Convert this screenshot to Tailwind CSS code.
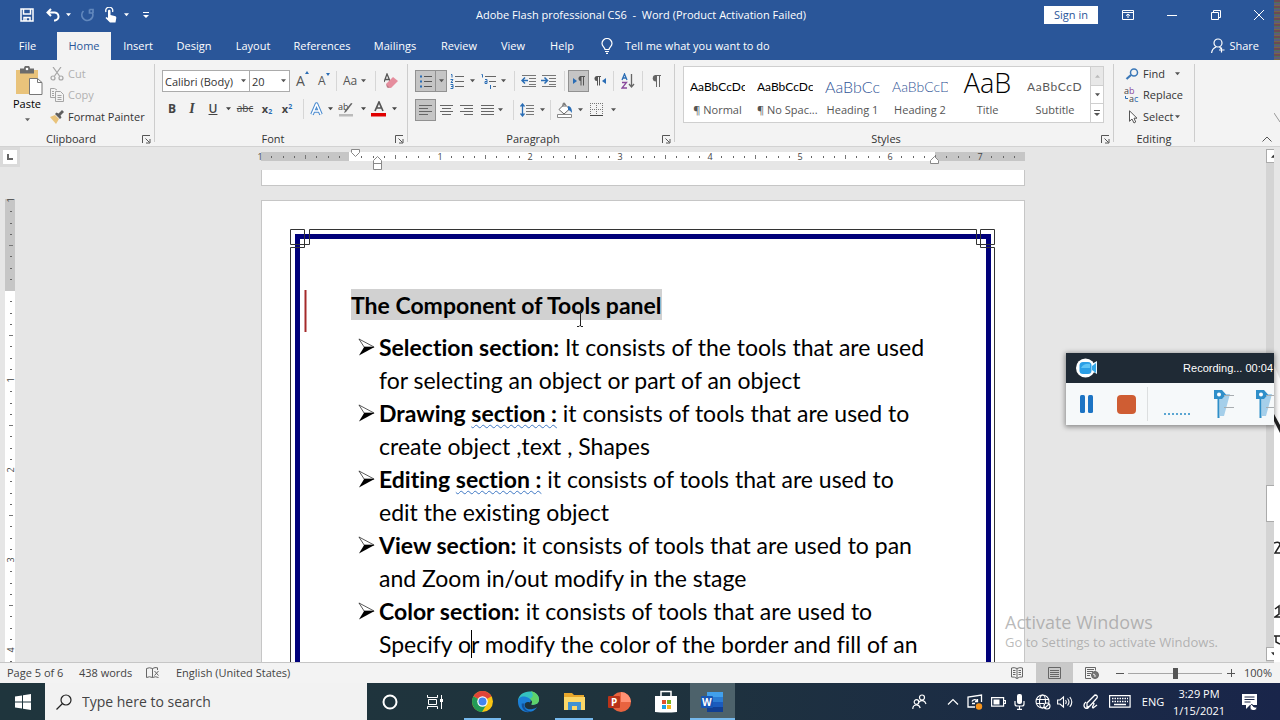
<!DOCTYPE html>
<html lang="en">
<head>
  <meta charset="UTF-8" />
  <meta name="viewport" content="width=device-width, initial-scale=1.0" />
  <title>Adobe Flash professional CS6 - Word</title>
  <script src="https://cdn.jsdelivr.net/npm/@tailwindcss/browser@4"></script>
</head>
<body class="h-screen overflow-hidden flex flex-col bg-[#e6e6e6] font-['Open_Sans',sans-serif] text-[11px] leading-4 text-[#333]">
  <!-- shared symbols -->
  <svg class="hidden">
    <symbol id="arrow" viewBox="0 0 6 4"><path d="M0 0h6L3 3.5z" fill="currentColor" /></symbol>
    <symbol id="launcher" viewBox="0 0 9 9"><path d="M.5 8V.5H8M3.5 3.5l4 4M8 4v4H4" fill="none" stroke="#555" /></symbol>
    <symbol id="bullet" viewBox="0 0 18 20"><path d="M1 1.500 17 10 6.500 10z" fill="#fff" stroke="#222" stroke-width=".8" /><path d="M6.500 10H17.500L1 19z" fill="#000" /></symbol>
  </svg>

  <div class="relative flex flex-1 min-h-0">
    <div class="flex flex-col flex-1 min-w-0">
      <!-- title bar -->
      <header class="bg-[#2a5699] text-white">
        <div class="flex items-center h-8 pb-0.5">
          <div class="flex items-center w-[400px] pl-5">
            <button aria-label="Save" class="w-[26px]"><svg class="w-3.5 h-3.5" viewBox="0 0 14 14" fill="none" stroke="#fff" stroke-width="1.500"><path d="M1 1h12v12H1zM3.500 1v5h7V1M4 13V9.500h6V13M6 10v3" /></svg></button>
            <button aria-label="Undo" class="w-[18px]"><svg class="w-3.5 h-3.5" viewBox="0 0 14 14" fill="none" stroke="#fff" stroke-width="2"><path d="M5 1 1.500 4.500 5 8M2 4.500h6a4 4 0 0 1 1 8H8" /></svg></button>
            <svg class="w-[5px] h-1 mx-0.5"><use href="#arrow" /></svg>
            <button aria-label="Redo" class="w-6 ml-[7px] text-[#6288bd]"><svg class="w-3.5 h-3.5" viewBox="0 0 14 14" fill="none" stroke="currentColor" stroke-width="1.700"><path d="M9.500 1.500H13V5M3.500 3a5.500 5.500 0 1 0 9 2M9.500 1.500v3.500H13" /></svg></button>
            <button aria-label="Touch mode" class="w-[18px]"><svg class="w-3.5 h-4" viewBox="0 0 14 16"><path d="M2 5a3.500 3.500 0 1 1 6.500 0" fill="none" stroke="#fff" stroke-width="1.300" /><path d="M4 4a1 1 0 0 1 2.500 0v4l5 1.200q1 .5.800 1.800l-.8 4.500H6L1.500 11l1-1L4 11z" fill="#fff" /></svg></button>
            <svg class="w-[5px] h-1 mx-0.5"><use href="#arrow" /></svg>
            <button aria-label="Customize toolbar" class="ml-3"><svg class="w-1.5 h-2" viewBox="0 0 6 8" fill="#fff"><path d="M0 1h6v1H0zM0 4h6L3 7z" /></svg></button>
          </div>
          <h1 class="flex-1 pl-[76px] whitespace-pre">Adobe Flash professional CS6  -  Word (Product Activation Failed)</h1>
          <button class="w-[54px] h-[18px] bg-white text-[#2a5699] leading-[18px]">Sign in</button>
          <button aria-label="Ribbon display options" class="w-11 ml-2 flex justify-center"><svg class="w-3 h-2.5" viewBox="0 0 12 10" fill="none" stroke="#fff"><path d="M.5.500h11v9H.500zM.500 2.500h11M6 8V4M4 5.700 6 4l2 1.700" /></svg></button>
          <button aria-label="Minimize" class="w-11 flex justify-center"><svg class="w-2.5 h-2.5" viewBox="0 0 10 10" stroke="#fff"><path d="M0 5.500h10" /></svg></button>
          <button aria-label="Restore" class="w-11 flex justify-center"><svg class="w-2.5 h-2.5" viewBox="0 0 10 10" fill="none" stroke="#fff"><path d="M.5 2.500h7v7h-7zM2.500 2V.500h7v7H8" /></svg></button>
          <button aria-label="Close" class="w-[42px] -mr-1.5 flex justify-center"><svg class="w-2.5 h-2.5" viewBox="0 0 10 10" stroke="#fff"><path d="M0 0l10 10M10 0 0 10" /></svg></button>
        </div>
        <!-- tabs -->
        <nav class="flex h-7 items-stretch">
          <button class="w-[57px] pr-0.5">File</button>
          <button class="w-[54px] bg-[#f3f3f3] text-[#2a5699]">Home</button>
          <button class="w-[54px]">Insert</button>
          <button class="w-[58px]">Design</button>
          <button class="w-[60px]">Layout</button>
          <button class="w-[78px]">References</button>
          <button class="w-[68px]">Mailings</button>
          <button class="w-[60px]">Review</button>
          <button class="w-12">View</button>
          <button class="w-[50px]">Help</button>
          <button class="flex items-center gap-3 pl-3.5"><svg class="w-3 h-4" viewBox="0 0 12 16" fill="none" stroke="#fff" stroke-width="1.200"><path d="M4 11.500c0-2-3-3-3-6a5 5 0 0 1 10 0c0 3-3 4-3 6zM4 13.500h4M5 15.400h2" /></svg>Tell me what you want to do</button>
          <button class="flex items-center gap-1 ml-auto pr-[15px]"><svg class="w-3.5 h-4" viewBox="0 0 14 16" fill="none" stroke="#fff" stroke-width="1.200"><circle cx="7" cy="5" r="4" /><path d="M.6 15c.3-3 2-5 4.500-6M8.500 9l1.500 1.500M10.500 9.500v5M8 12h5.500" /></svg>Share</button>
        </nav>
      </header>

      <!-- ribbon -->
      <section class="flex items-stretch bg-[#f3f3f3] h-[87px] border-b border-[#d2d2d2] pt-1 text-[#333]">
        <div class="flex flex-col w-[155px] border-r border-[#cdcdcd] mb-1">
          <div class="flex h-[67px] shrink-0">
            <button class="flex flex-col items-center w-[54px] pt-0.5">
              <svg class="w-7 h-[30px] ml-1" viewBox="0 0 28 30"><path d="M1 4h22v24H1z" fill="#e9c37b" /><path d="M5 2.500h4a3 3 0 0 1 6 0h4v5H5z" fill="#6b6b6b" /><circle cx="12" cy="3" r="1.300" fill="#fff" /><path d="M14.500 12.500h8l4.500 4v12H14.500z" fill="#fff" stroke="#777" /><path d="M22.500 12.500v4H27" fill="none" stroke="#777" /></svg>
              <span class="text-black">Paste</span>
              <svg class="w-[5px] h-1 mt-1.5 text-[#666]"><use href="#arrow" /></svg>
            </button>
            <div class="flex flex-col -mt-px">
              <button disabled class="flex items-center gap-1 h-[21px] text-[#b1b1b1] -ml-1"><svg class="w-3.5 h-3.5" viewBox="0 0 14 14" fill="none" stroke="#a5a5a5" stroke-width="1.200"><path d="M3 0l6.500 9M11 0 4.500 9" /><circle cx="3" cy="11" r="2" /><circle cx="11" cy="11" r="2" /></svg>Cut</button>
              <button disabled class="flex items-center gap-1 h-[22px] text-[#b1b1b1] -ml-1"><svg class="w-3.5 h-3.5" viewBox="0 0 14 14" fill="none" stroke="#a5a5a5"><path d="M5 9.500H.500v-9h4L7 2M2 3.500h2M2 5.500h2M2 7.500h2M5.500 3.500h5l3 3v7h-8zM7.500 7.500h4M7.500 9.500h4M7.500 11.500h4" /></svg>Copy</button>
              <button class="flex items-center gap-1 h-[21px] -ml-1"><svg class="w-3.5 h-3.5" viewBox="0 0 14 14"><path d="M0 7l5-2 4 4-3 5z" fill="#e9c37b" /><path d="M5 4l1.500-1.500 2 1L12 0l2 2-3.500 3.500 1 2L10 9z" fill="#5f5f5f" /></svg>Format Painter</button>
            </div>
          </div>
          <div class="flex items-center"><span class="flex-1 text-center">Clipboard</span><svg class="w-[9px] h-[9px] mr-[3px]"><use href="#launcher" /></svg></div>
        </div>

        <div class="flex flex-col w-[253px] border-r border-[#cdcdcd] mb-1">
          <div class="flex flex-col h-[67px] shrink-0 pl-[7px] gap-1 pt-1.5">
            <div class="flex items-center h-[22px]">
              <div class="relative w-[88px]">
                <input aria-label="Font" value="Calibri (Body)" class="w-full h-[22px] border border-[#ababab] bg-white px-0.5" />
                <svg class="absolute right-1 top-[9px] w-[5px] h-1 text-[#555]"><use href="#arrow" /></svg>
              </div>
              <div class="relative w-[41px] -ml-px">
                <input aria-label="Font size" value="20" class="w-full h-[22px] border border-[#ababab] bg-white px-0.5" />
                <svg class="absolute right-1 top-[9px] w-[5px] h-1 text-[#555]"><use href="#arrow" /></svg>
              </div>
              <button aria-label="Grow font" class="flex w-[22px] pl-1.5 text-sm text-[#555]">A<svg class="w-1 h-1" viewBox="0 0 4 4" fill="#2a6db5"><path d="M0 3h4L2 0z" /></svg></button>
              <button aria-label="Shrink font" class="flex w-[22px] pl-1.5 text-xs text-[#555]">A<svg class="w-1 h-1" viewBox="0 0 4 4" fill="#2a6db5"><path d="M0 0h4L2 3z" /></svg></button>
              <span class="w-px h-5 bg-[#d6d6d6] ml-0.5"></span>
              <button aria-label="Change case" class="flex items-center gap-1 w-[38px] pl-1.5 text-xs text-[#555]">Aa<svg class="w-[5px] h-1"><use href="#arrow" /></svg></button>
              <span class="w-px h-5 bg-[#d6d6d6]"></span>
              <button aria-label="Clear formatting" class="pl-2"><svg class="w-3.5 h-4" viewBox="0 0 14 16"><path d="M0 9 3 1l3 7M1 6.500h4" fill="none" stroke="#555" stroke-width="1.300" /><path d="M2 11l7-7 5 4-7 7-3-.5z" fill="#e58d9d" /><path d="M2 11l4 4-3-.5z" fill="#b97783" /></svg></button>
            </div>
            <div class="flex items-center h-[22px] pt-1 text-xs text-[#444]">
              <button class="w-5 font-bold">B</button>
              <button class="w-5 italic font-semibold font-['Liberation_Serif',serif] text-sm">I</button>
              <button class="w-[22px] font-semibold underline">U</button>
              <svg class="w-[5px] h-1 mx-0.5"><use href="#arrow" /></svg>
              <button class="w-6 text-[10px] line-through">abc</button>
              <button class="w-5 font-bold text-[11px]">x<sub class="text-[7px] text-[#2a6db5]">2</sub></button>
              <button class="w-5 font-bold text-[11px]">x<sup class="text-[7px] text-[#2a6db5]">2</sup></button>
              <span class="w-px h-5 bg-[#d6d6d6] ml-1.5"></span>
              <button aria-label="Text effects" class="w-6 flex justify-center"><svg class="w-[13px] h-3.5" viewBox="0 0 13 14" fill="none" stroke-linejoin="round"><path d="M2 12.500 6.500 2 11 12.500M4 9h5" stroke="#4a8bd0" stroke-width="3.600" /><path d="M2 12.500 6.500 2 11 12.500M4 9h5" stroke="#fff" stroke-width="1.600" /></svg></button>
              <svg class="w-[5px] h-1"><use href="#arrow" /></svg>
              <button aria-label="Highlight" class="w-[26px] flex justify-center"><svg class="w-4 h-4" viewBox="0 0 16 16"><text x="0" y="9" font-size="9" fill="#444">ab</text><path d="M14.500 2.500 8 11l-2 1 1-2.500L13 2z" fill="#666" /><path d="M1 13h14v2.500H1z" fill="#bbb" /></svg></button>
              <svg class="w-[5px] h-1 ml-0.5"><use href="#arrow" /></svg>
              <button aria-label="Font color" class="w-[26px] flex justify-center"><svg class="w-4 h-4" viewBox="0 0 16 16"><path d="M4 10 8 1l4 9M5.500 7h5" fill="none" stroke="#555" stroke-width="1.700" /><path d="M0 12h15v3.500H0z" fill="#e00000" /></svg></button>
              <svg class="w-[5px] h-1"><use href="#arrow" /></svg>
            </div>
          </div>
          <div class="flex items-center"><span class="flex-1 text-center pr-1">Font</span><svg class="w-[9px] h-[9px] mr-[3px]"><use href="#launcher" /></svg></div>
        </div>

        <div class="flex flex-col w-[267px] border-r border-[#cdcdcd] mb-1 text-[#555]">
          <div class="flex flex-col h-[67px] shrink-0 pl-[7px] gap-[7px] pt-1.5">
            <div class="flex items-center h-[22px]">
              <button aria-label="Bullets" class="flex items-center justify-center w-[21px] h-[22px] bg-[#c5c5c5] border border-[#919191]"><svg class="w-3.5 h-3.5" viewBox="0 0 14 14"><path d="M5 2.500h8M5 7.500h8M5 12.500h8" stroke="#555" /><path d="M1 1.500h2v2H1zM1 6.500h2v2H1zM1 11.500h2v2H1z" fill="#2a6db5" /></svg></button>
              <button aria-label="Bullet options" class="flex items-center justify-center w-3 h-[22px] bg-[#c5c5c5] border border-[#919191] -ml-px"><svg class="w-[5px] h-1"><use href="#arrow" /></svg></button>
              <button aria-label="Numbering" class="flex items-center gap-1.5 w-8 pl-[3px]"><svg class="w-3.5 h-4 shrink-0" viewBox="0 0 14 16"><path d="M5 3.500h9M5 8.500h9M5 13.500h9" stroke="#666" /><path d="M1 1.500h1v3M.5 6.500H3L1 9.500h2M.5 11.500H3v4H.500M1 13.500h2" fill="none" stroke="#2a6db5" /></svg><svg class="w-[5px] h-1"><use href="#arrow" /></svg></button>
              <button aria-label="Multilevel list" class="flex items-center gap-1 w-[29px] pl-0.5"><svg class="w-4 h-4 shrink-0" viewBox="0 0 16 16"><path d="M4 3.500h11M8 8.500h7M12 13.500h3" stroke="#666" /><path d="M.5 1.500h1v3M4 6.500h2v4H4v-2h2M9.500 12v4" fill="none" stroke="#2a6db5" /></svg><svg class="w-[5px] h-1"><use href="#arrow" /></svg></button>
              <span class="w-px h-5 bg-[#d6d6d6] ml-1.5"></span>
              <button aria-label="Decrease indent" class="w-[22px] pl-1.5"><svg class="w-4 h-3.5" viewBox="0 0 16 14"><path d="M1 1.500h14M8 4.500h7M8 7.500h7M8 10.500h7M1 12.500h14" stroke="#777" /><path d="M7 6.500H1.500M4 3.500l-3 3 3 3" fill="none" stroke="#2a6db5" stroke-width="1.500" /></svg></button>
              <button aria-label="Increase indent" class="w-[27px] pl-1"><svg class="w-4 h-3.5" viewBox="0 0 16 14"><path d="M1 1.500h14M8 4.500h7M8 7.500h7M8 10.500h7M1 12.500h14" stroke="#777" /><path d="M0 6.500h6M3.500 3.500l3 3-3 3" fill="none" stroke="#2a6db5" stroke-width="1.500" /></svg></button>
              <span class="w-px h-5 bg-[#d6d6d6]"></span>
              <button aria-label="Left to right" class="flex items-center justify-center w-[21px] h-[22px] bg-[#c5c5c5] border border-[#919191] ml-[3px]"><svg class="w-3 h-3" viewBox="0 0 12 12"><path d="M0 3v6l4-3z" fill="#2a6db5" /><path d="M8 1.500v9M10.500 1.500v9M7 1.500h5" stroke="#555" /><path d="M8 1a2.500 2.500 0 0 0 0 5z" fill="#555" /></svg></button>
              <button aria-label="Right to left" class="flex items-center justify-center w-[21px]"><svg class="w-3 h-3" viewBox="0 0 12 12"><path d="M12 3v6L8 6z" fill="#2a6db5" /><path d="M3.500 1.500v9M5.500 1.500v9M3 1.500h4" stroke="#555" /><path d="M3 1a2.500 2.500 0 0 0 0 5z" fill="#555" /></svg></button>
              <span class="w-px h-5 bg-[#d6d6d6] ml-[3px]"></span>
              <button aria-label="Sort" class="w-[28px] pl-[7px]"><svg class="w-3.5 h-4" viewBox="0 0 14 16" fill="none" stroke-width="1.300"><path d="M1 7 3.500 1 6 7M2 5h3" stroke="#2a6db5" /><path d="M1 9.500h4.500L1 15h5" stroke="#8a4a9c" /><path d="M10.500 1v12.500M8 11l2.500 3L13 11" stroke="#666" /></svg></button>
              <span class="w-px h-5 bg-[#d6d6d6]"></span>
              <button aria-label="Show marks" class="pl-2"><svg class="w-2.5 h-3" viewBox="0 0 10 12"><path d="M5.500 1v11M8.500 1v11M4 .500h6" stroke="#666" /><path d="M5 0a3 3 0 0 0 0 6.500z" fill="#666" /></svg></button>
            </div>
            <div class="flex items-center h-[22px]">
              <button aria-label="Align left" class="flex items-center justify-center w-[21px] h-[22px] bg-[#c5c5c5] border border-[#919191]"><svg class="w-3.5 h-3" viewBox="0 0 14 12"><path d="M0 1.500h13M0 4.500h9M0 7.500h13M0 10.500h9" stroke="#666" /></svg></button>
              <button aria-label="Center" class="flex justify-center w-[21px]"><svg class="w-3.5 h-3" viewBox="0 0 14 12"><path d="M0 1.500h13M2 4.500h9M0 7.500h13M2 10.500h9" stroke="#666" /></svg></button>
              <button aria-label="Align right" class="flex justify-center w-5"><svg class="w-3.5 h-3" viewBox="0 0 14 12"><path d="M0 1.500h13M4 4.500h9M0 7.500h13M4 10.500h9" stroke="#666" /></svg></button>
              <button aria-label="Justify" class="flex justify-center w-[21px]"><svg class="w-3.5 h-3" viewBox="0 0 14 12"><path d="M0 1.500h13M0 4.500h13M0 7.500h13M0 10.500h13" stroke="#666" /></svg></button>
              <svg class="w-[5px] h-1"><use href="#arrow" /></svg>
              <span class="w-px h-5 bg-[#d6d6d6] ml-2.5"></span>
              <button aria-label="Line spacing" class="flex items-center gap-1.5 w-8 pl-1.5"><svg class="w-3.5 h-3.5 shrink-0" viewBox="0 0 14 14" fill="none"><path d="M6 2.500h8M6 5.500h8M6 8.500h8M6 11.500h8" stroke="#777" /><path d="M2.500 1v12M.500 3.500l2-2.500 2 2.500M.500 10.500l2 2.500 2-2.500" stroke="#2a6db5" stroke-width="1.300" /></svg><svg class="w-[5px] h-1 shrink-0"><use href="#arrow" /></svg></button>
              <span class="w-px h-5 bg-[#d6d6d6] ml-1"></span>
              <button aria-label="Shading" class="flex items-center gap-[5px] w-9 pl-1.5"><svg class="w-4 h-4 shrink-0" viewBox="0 0 16 16"><path d="M2 7.500 7.500 2l5 5-5.500 5z" fill="#fff" stroke="#666" /><path d="M6 5V1.500q1-1 2 0V5" fill="none" stroke="#666" /><path d="M11 4q4 0 4 7-2-3-4-3z" fill="#2a6db5" /><path d="M.5 12.500h14v3H.500z" fill="#fff" stroke="#888" /></svg><svg class="w-[5px] h-1 shrink-0"><use href="#arrow" /></svg></button>
              <button aria-label="Borders" class="flex items-center gap-[7px] w-8 pl-[3px]"><svg class="w-3.5 h-3.5 shrink-0" viewBox="0 0 14 14"><path d="M.5 0v12M12.500 0v12M6.500 0v12M0 .500h13M0 6.500h13" stroke="#777" stroke-dasharray="1 1" /><path d="M0 12.500h13" stroke="#444" /></svg><svg class="w-[5px] h-1 shrink-0"><use href="#arrow" /></svg></button>
            </div>
          </div>
          <div class="flex items-center text-[#333]"><span class="flex-1 text-center pr-1">Paragraph</span><svg class="w-[9px] h-[9px] mr-[3px]"><use href="#launcher" /></svg></div>
        </div>

        <div class="flex flex-col w-[439px] border-r border-[#cdcdcd] mb-1">
          <div class="h-[67px] shrink-0 pl-2 pr-[9px] pt-0.5">
            <div class="flex h-[57px] bg-white border border-[#cfcfcf] text-[#555]">
              <button class="flex flex-col w-[67px] px-1.5"><span class="w-full h-[35px] overflow-hidden whitespace-nowrap text-left leading-10 font-['Lato',sans-serif] text-xs text-black">AaBbCcDc</span><span class="w-full whitespace-nowrap">¶ Normal</span></button>
              <button class="flex flex-col w-[68px] px-1.5"><span class="w-full h-[35px] overflow-hidden whitespace-nowrap text-left leading-10 font-['Lato',sans-serif] text-xs text-black">AaBbCcDc</span><span class="w-full whitespace-nowrap">¶ No Spac...</span></button>
              <button class="flex flex-col w-[67px] px-1.5"><span class="w-full h-[35px] overflow-hidden whitespace-nowrap text-left leading-10 font-['Lato',sans-serif] font-light text-base text-[#2f5496]">AaBbCc</span><span class="w-full whitespace-nowrap">Heading 1</span></button>
              <button class="flex flex-col w-[68px] px-1.5"><span class="w-full h-[35px] overflow-hidden whitespace-nowrap text-left leading-10 font-['Lato',sans-serif] font-light text-sm text-[#2f5496]">AaBbCcD</span><span class="w-full whitespace-nowrap">Heading 2</span></button>
              <button class="flex flex-col w-[67px] px-1.5"><span class="w-full h-[35px] overflow-hidden whitespace-nowrap text-center leading-8 font-['Open_Sans',sans-serif] font-light text-[27px] text-black">AaB</span><span class="w-full whitespace-nowrap">Title</span></button>
              <button class="flex flex-col w-[68px] px-1.5"><span class="w-full h-[35px] overflow-hidden whitespace-nowrap text-left leading-10 font-['Lato',sans-serif] text-xs tracking-wider text-[#5a5a5a]">AaBbCcD</span><span class="w-full whitespace-nowrap">Subtitle</span></button>
              <div class="flex flex-col flex-1 ml-px border-l border-[#cfcfcf] divide-y divide-[#cfcfcf]">
                <button aria-label="Scroll up" disabled class="flex-1 flex items-center justify-center bg-[#e8e8e8] text-[#bbb]"><svg class="w-[5px] h-1 rotate-180"><use href="#arrow" /></svg></button>
                <button aria-label="Scroll down" class="flex-1 flex items-center justify-center"><svg class="w-[5px] h-1"><use href="#arrow" /></svg></button>
                <button aria-label="More styles" class="flex-1 flex items-center justify-center"><svg class="w-1.5 h-1.5" viewBox="0 0 6 6" fill="#555"><path d="M0 0h6v1H0zM0 3h6L3 6z" /></svg></button>
              </div>
            </div>
          </div>
          <div class="flex items-center"><span class="flex-1 text-center pr-1">Styles</span><svg class="w-[9px] h-[9px] mr-[3px]"><use href="#launcher" /></svg></div>
        </div>

        <div class="flex flex-col w-[81px] border-r border-[#cdcdcd] mb-1">
          <div class="flex flex-col h-[67px] shrink-0 pl-[11px] -mt-px mb-px">
            <button class="flex items-center gap-1 h-[21px]"><svg class="w-3.5 h-3" viewBox="0 0 14 12" fill="none" stroke="#3b78b8"><circle cx="9" cy="4.500" r="3.500" stroke-width="1.500" /><path d="M6 7 1.500 11" stroke-width="2.200" /></svg>Find<svg class="w-[5px] h-1 ml-1.5 text-[#555]"><use href="#arrow" /></svg></button>
            <button class="flex items-center gap-1 h-[22px]"><svg class="w-3.5 h-3.5 overflow-visible" viewBox="0 0 14 14"><text x="-1" y="6" font-size="9" fill="#444">a<tspan fill="#8a4a9c">b</tspan></text><text x="4" y="14" font-size="9" fill="#444">a<tspan fill="#2a6db5">c</tspan></text><path d="M.5 8v2.500H3" fill="none" stroke="#2a6db5" /></svg>Replace</button>
            <button class="flex items-center gap-1 h-[21px]"><svg class="w-3.5 h-3.5" viewBox="0 0 14 14"><path d="M4.500.800v10.500L7 9l2 4 1.700-1L9 8.200h3z" fill="#fff" stroke="#555" /></svg>Select<svg class="w-[5px] h-1 -ml-0.5 text-[#555]"><use href="#arrow" /></svg></button>
          </div>
          <span class="text-center">Editing</span>
        </div>
        <button aria-label="Collapse ribbon" class="ml-auto self-end mb-1 mr-0.5"><svg class="w-2.5 h-1.5" viewBox="0 0 10 6" fill="none" stroke="#555"><path d="M.5 5.500 5 1l4.500 4.500" /></svg></button>
      </section>

      <!-- document area -->
      <main class="flex flex-1 min-h-0 overflow-hidden">
        <div class="w-5 shrink-0">
          <button aria-label="Tab selector" class="flex items-center justify-center w-5 h-5 border-3 border-[#dadada] bg-white text-[#666]"><svg class="w-1.5 h-1.5" viewBox="0 0 6 6"><path d="M1 0v5h5" fill="none" stroke="currentColor" stroke-width="2" /></svg></button>
          <svg id="vruler" class="w-4 h-[468px] mt-[31px]"></svg>
        </div>

        <div class="flex-1 min-w-0 overflow-hidden">
          <div class="w-[764px] mx-auto">
            <svg id="hruler" class="block w-full h-[23px] overflow-visible"></svg>
            <div class="h-4 bg-white border border-t-0 border-[#c6c6c6]"></div>
            <article class="relative mt-3.5 h-[980px] bg-white border border-[#c6c6c6] pt-[88px] pl-[89px] pr-20 font-['Lato',sans-serif] text-[23px] leading-[33px] text-black [font-variant-ligatures:none]">
              <!-- page border -->
              <svg class="absolute -left-px -top-px w-full h-full" fill="none">
                <path d="M36.500 980V36.500H727.500V980" stroke="#00007a" stroke-width="5" />
                <path d="M29.500 980V47.500h14v-18h-14v15h19v-15H715.500v15h18v-15h-14v18h14V980" stroke="#333" />
                <path d="M44.500 90v42" stroke="#a52a2a" stroke-width="2" />
              </svg>
              <h2 class="relative h-[42px] font-bold"><span class="inline-block h-[31px] leading-8 bg-[#d1d1d1]">The Component of Tools panel</span></h2>
              <ul class="relative pl-7">
                <li class="relative"><svg class="absolute -left-[21px] top-1.5 w-[17px] h-5"><use href="#bullet" /></svg><b>Selection section:</b> It consists of the tools that are used<br>for selecting an object or part of an object</li>
                <li class="relative"><svg class="absolute -left-[21px] top-1.5 w-[17px] h-5"><use href="#bullet" /></svg><b>Drawing <span class="underline decoration-wavy decoration-1 decoration-[#3f78c4] underline-offset-2">section :</span></b> it consists of tools that are used to<br>create object ,text , Shapes</li>
                <li class="relative"><svg class="absolute -left-[21px] top-1.5 w-[17px] h-5"><use href="#bullet" /></svg><b>Editing <span class="underline decoration-wavy decoration-1 decoration-[#3f78c4] underline-offset-2">section :</span></b> it consists of tools that are used to<br>edit the existing object</li>
                <li class="relative"><svg class="absolute -left-[21px] top-1.5 w-[17px] h-5"><use href="#bullet" /></svg><b>View section:</b> it consists of tools that are used to pan<br>and Zoom in/out modify in the stage</li>
                <li class="relative"><svg class="absolute -left-[21px] top-1.5 w-[17px] h-5"><use href="#bullet" /></svg><b>Color section:</b> it consists of tools that are used to<br>Specify o<span class="relative"><span class="absolute left-0 top-0 w-px h-7 bg-black"></span>r</span> modify the color of the border and fill of an</li>
              </ul>
              <svg class="absolute left-[314px] top-[110px] w-2 h-4" viewBox="0 0 8 16" fill="none" stroke="#222"><path d="M1 .500h2l1 1 1-1h2M4.500 1v14M1 15.500h2l1-1 1 1h2" /></svg>
            </article>
          </div>
        </div>

        <div class="flex flex-col w-2 shrink-0 bg-[#d4d4d4] mt-0.5 overflow-hidden">
          <button aria-label="Page up" class="w-3.5 h-3.5 shrink-0 bg-white border border-[#ababab] flex items-center justify-center"><svg class="w-[5px] h-1 rotate-180"><use href="#arrow" /></svg></button>
          <div class="w-3.5 h-[37px] mt-auto mb-[125px] shrink-0 bg-white border border-[#ababab]"></div>
          <button aria-label="Page down" class="w-3.5 h-3.5 mb-px shrink-0 bg-white border border-[#ababab] flex items-center justify-center"><svg class="w-[5px] h-1"><use href="#arrow" /></svg></button>
        </div>
      </main>

      <!-- status bar -->
      <footer class="flex items-center h-[21px] bg-[#f3f3f3] border-t border-[#c6c6c6] text-[#444] text-[11px]">
        <span class="w-[71px] pl-[7px] whitespace-nowrap">Page 5 of 6</span>
        <span class="w-[75px] pl-2 whitespace-nowrap">438 words</span>
        <svg class="w-3.5 h-3" viewBox="0 0 14 12" fill="none" stroke="#666"><path d="M6.500 10.500q-3-1.500-6 0v-9q3-1.500 6 0zM6.500 1.500Q9 0 11.500.800V3M6.500 10.500q3-1.500 6 0M8.500 4l4 4.500M12.500 4l-4 4.500" /></svg>
        <span class="pl-4">English (United States)</span>
        <button aria-label="Read mode" class="flex justify-center ml-auto w-[38px]"><svg class="w-3 h-3" viewBox="0 0 12 12" fill="none" stroke="#666"><path d="M6 11.500V1.500Q3 0 .500 1v9q3-.500 5.500 1.500Q8.500 9.500 11.500 10V1Q9 0 6 1.500M2 3.500h2.500M2 5.500h2.500M2 7.500h2.500M7.500 3.500H10M7.500 5.500H10M7.500 7.500H10" /></svg></button>
        <button aria-label="Print layout" class="flex items-center justify-center w-[37px] h-5 bg-[#c9c9c9]"><svg class="w-[13px] h-3" viewBox="0 0 13 12" fill="none" stroke="#666"><path d="M.5.500h12v11H.500zM2 3.500h9M2 5.500h9M2 7.500h9M2 9.500h9" /></svg></button>
        <button aria-label="Web layout" class="flex justify-center w-[38px]"><svg class="w-3.5 h-3" viewBox="0 0 14 12" fill="none" stroke="#666"><path d="M10.500 3.500v-3H.500v11H6M2 2.500h7M2 4.500h6M2 6.500h4M2 8.500h3" /><circle cx="10" cy="8" r="3.500" fill="#777" /><path d="M8 7l2 1v2" stroke="#eee" /></svg></button>
        <button aria-label="Zoom out" class="w-[17px] flex justify-center"><svg class="w-2 h-2" viewBox="0 0 8 8" stroke="#555"><path d="M0 4.500h8" /></svg></button>
        <div class="relative w-[94px] h-5">
          <input type="range" aria-label="Zoom" value="50" class="absolute inset-0 w-full opacity-0" />
          <span class="absolute inset-x-0 top-2.5 h-px bg-[#a6a6a6]"></span>
          <span class="absolute left-[45px] top-[5px] w-[5px] h-[11px] bg-[#555]"></span>
        </div>
        <button aria-label="Zoom in" class="w-[18px] flex justify-center"><svg class="w-2 h-2" viewBox="0 0 8 8" stroke="#555"><path d="M0 4.500h8M4.500 0v8" /></svg></button>
        <span class="w-[34px] pr-0.5 text-right">100%</span>
      </footer>
    </div>

    <!-- sliver of the second screen -->
    <div class="flex flex-col w-1.5 shrink-0 bg-white overflow-hidden">
      <div class="h-[60px] bg-[repeating-linear-gradient(180deg,#6d4a55_0_2px,#4f7058_2px_3px,#5d5a7c_3px_5px,#756846_5px_6px)]"></div>
      <div class="h-[87px] bg-[#f3f3f3] border-b border-[#d2d2d2]"><svg class="block w-1.5 h-20" fill="none"><path d="M0 53l6 9" stroke="#999" /></svg></div>
      <svg class="block w-1.5 flex-1" fill="none"><path d="M0 0h6v232L0 218z" fill="#e6e6e6" /><path d="M0 267l6 11v8L0 274z" fill="#222" /><path d="M0 396q6-2 6 2l-5 8h5M1 462l4-3v8l-4 3h5M0 489h6M2 489v6l4 2" stroke="#222" stroke-width="1.500" /></svg>
      <div class="h-[21px] bg-[#f3f3f3]"></div>
    </div>

    <!-- screen recorder -->
    <section class="absolute right-1.5 top-[353px] w-[208px] h-[72px] shadow-[0_1px_5px_1px_rgba(0,0,0,0.400)] bg-[#f6f9fa] font-['Liberation_Sans',sans-serif]">
      <div class="flex items-center justify-between h-[30px] bg-[#1f2a35] pl-2.5 pr-px text-white"><svg class="w-[22px] h-5" viewBox="0 0 22 20"><path d="M14 7l7-4v13l-7-4z" fill="#e8f7ff" /><circle cx="9.500" cy="10" r="9.500" fill="#fff" /><path d="M16 8l4-3v10l-4-3z" fill="#36a8e8" /><rect x="3.500" y="4" width="12" height="12" rx="3.500" fill="#2b9fe6" /><path d="M5 10q3-5 9-4v4z" fill="#5fc4f5" /></svg><span>Recording... 00:04</span></div>
      <div class="flex items-center h-[42px] pl-3.5 overflow-hidden">
        <button aria-label="Pause" class="w-[37px] shrink-0"><svg class="w-3.5 h-[18px]" viewBox="0 0 14 18" fill="#1c74c4"><rect width="5" height="18" rx="1.500" /><rect x="8" width="5" height="18" rx="1.500" /></svg></button>
        <button aria-label="Stop" class="w-[19px] h-[19px] shrink-0 rounded bg-[#cf5d33]"></button>
        <span class="w-px h-[34px] ml-[11px] shrink-0 bg-[#dcdfe0]"></span>
        <span class="w-[26px] h-0.5 mt-5 ml-4 shrink-0 bg-[repeating-linear-gradient(90deg,#5ba6d2_0_2px,transparent_2px_4px)]"></span>
        <svg class="w-5 h-7 ml-6 shrink-0" viewBox="0 0 20 28"><path d="M6 4h10l-6 22H6z" fill="#a5cfea" /><path d="M0 0h8l4 4.500L8 9H0z" fill="#2f8fc9" /><circle cx="5" cy="4.500" r="2" fill="#fff" /><path d="M4.500 9v19" stroke="#2f8fc9" stroke-width="2" /><path d="M10 5.500h10M10 17.500h10" stroke="#a8adb0" /></svg>
        <svg class="w-5 h-7 ml-[22px] shrink-0" viewBox="0 0 20 28"><path d="M6 4h10l-6 22H6z" fill="#a5cfea" /><path d="M0 0h8l4 4.500L8 9H0z" fill="#2f8fc9" /><circle cx="5" cy="4.500" r="2" fill="#fff" /><path d="M4.500 9v19" stroke="#2f8fc9" stroke-width="2" /><path d="M10 5.500h10M10 17.500h10" stroke="#a8adb0" /></svg>
      </div>
    </section>

    <!-- activation notice -->
    <div class="absolute left-[1005px] bottom-[31px] text-[#8c8c8c]/60 whitespace-nowrap">
      <p class="text-lg leading-5">Activate Windows</p>
      <p class="text-[13px] leading-5">Go to Settings to activate Windows.</p>
    </div>
  </div>

  <!-- taskbar -->
  <footer class="flex items-stretch h-[37px] shrink-0 bg-linear-to-r from-[#1f353d] via-[#1f333d] to-[#19254a] text-white">
    <button aria-label="Start" class="w-[45px] flex items-center justify-center"><svg class="w-4 h-4" viewBox="0 0 16 16" fill="#fff"><path d="M0 2.500 7 1.500v6H0zM8 1.300 16 0v7.500H8zM0 8.500h7v6L0 13.500zM8 8.500h8V16l-8-1.300z" /></svg></button>
    <label class="flex items-center gap-2.5 w-[322px] pl-[11px] bg-[#f2f2f2] text-[#444]">
      <svg class="w-4 h-4" viewBox="0 0 16 16" fill="none" stroke="#222" stroke-width="1.200"><circle cx="10" cy="6" r="5" /><path d="M6.500 9.500.500 15.500" /></svg>
      <input aria-label="Search" placeholder="Type here to search" class="flex-1 text-sm placeholder:text-[#444] outline-none" />
    </label>
    <button aria-label="Cortana" class="w-[46px] flex items-center justify-center"><svg class="w-4 h-4" viewBox="0 0 16 16"><circle cx="8" cy="8" r="6.500" fill="none" stroke="#fff" stroke-width="2" /></svg></button>
    <button aria-label="Task view" class="w-11 flex items-center justify-center"><svg class="w-4 h-4" viewBox="0 0 16 16" fill="none" stroke="#fff"><path d="M.5 1v2.500h10V1M1.500 5.500h8v5h-8zM.5 15v-2.500h10V15M14.500 1v14" /><path d="M13 5h3v3h-3z" fill="#fff" stroke="none" /></svg></button>
    <button aria-label="Chrome" class="w-[37px] ml-[7px] flex items-center justify-center border-b-2 border-[#76b9ed]"><svg class="w-[21px] h-[21px] mt-0.5" viewBox="0 0 22 22"><circle cx="11" cy="11" r="11" fill="#f9c513" /><path d="M11 11 1.500 5.500A11 11 0 0 1 20.500 5.500z" fill="#e0453a" /><path d="M1.500 5.500A11 11 0 0 0 10.500 22L15.500 13.500 11 11z" fill="#239a56" /><circle cx="11" cy="11" r="5.500" fill="#fff" /><circle cx="11" cy="11" r="4.200" fill="#4484ee" /></svg></button>
    <button aria-label="Edge" class="w-[54px] flex items-center justify-center"><svg class="w-[23px] h-[23px]" viewBox="0 0 24 24"><path d="M1 12C1-1 23-2 23 10c0 5-5 6-8 5 2-3 0-6-4-6-5 0-8 3-10 3z" fill="#35c1c0" /><path d="M14 1c6 1 9 5 9 9 0 5-5 6-8 5 2-3 0-5-2-6 5-1 4-6 1-8z" fill="#5fd26a" /><path d="M1 12c0-4 4-6 8-5 5 1 7 5 4 6-2-1-5 0-5 3 0 4 6 6 13 2-5 8-20 7-20-6z" fill="#1b7fd6" /><path d="M8 14c-2 4 2 9 8 8-6 3-12-2-11-8z" fill="#12529c" /></svg></button>
    <button aria-label="File Explorer" class="w-[38px] flex items-center justify-center border-b-2 border-[#76b9ed]"><svg class="w-[21px] h-[19px] mt-0.5" viewBox="0 0 21 19"><path d="M0 1h8l2 2h10v14H0z" fill="#e8a72b" /><path d="M0 5h21v13H0z" fill="#fbd768" /><path d="M4 10h13v8h-4v-4H8v4H4z" fill="#3f91d2" /></svg></button>
    <button aria-label="PowerPoint" class="w-[54px] flex items-center justify-center"><svg class="w-6 h-[22px]" viewBox="0 0 24 22"><circle cx="13" cy="11" r="10" fill="#e8633f" /><path d="M13 1a10 10 0 0 1 10 10H13z" fill="#ff9173" /><rect y="5" width="12" height="12" rx="1" fill="#b93218" /><text x="3" y="14.500" font-size="10" font-weight="700" fill="#fff">P</text></svg></button>
    <button aria-label="Store" class="w-[37px] flex items-center justify-center"><svg class="w-[22px] h-[23px]" viewBox="0 0 22 23"><path d="M6 6V1.500h10V6" fill="none" stroke="#fff" stroke-width="1.500" /><path d="M0 6h22v16q-11 1-22 0z" fill="#fff" /><path d="M7 10h4v4H7z" fill="#e2512d" /><path d="M12 10h4v4h-4z" fill="#78b320" /><path d="M7 15h4v4H7z" fill="#1ba3e4" /><path d="M12 15h4v4h-4z" fill="#f6b51c" /></svg></button>
    <button aria-label="Word" class="w-[45px] ml-1.5 flex items-center justify-center bg-[#4d626b] border-b-2 border-[#76b9ed]"><svg class="w-[23px] h-5 mt-0.5" viewBox="0 0 23 20"><path d="M6 0h16v5H6z" fill="#41a0ec" /><path d="M6 5h16v5H6z" fill="#2b7cd3" /><path d="M6 10h16v5H6z" fill="#1b5bbd" /><path d="M6 15h16v5H6z" fill="#113f93" /><rect y="4" width="12" height="12" rx="1" fill="#1756b5" /><text x="1" y="13.500" font-size="10" font-weight="700" fill="#fff">W</text></svg></button>

    <div class="flex items-center ml-auto pr-[22px]">
      <svg class="w-[15px] h-4" viewBox="0 0 15 16" fill="none" stroke="#fff" stroke-width="1.200"><circle cx="10" cy="3.500" r="2.500" /><circle cx="4.500" cy="8" r="2.300" /><path d="M.8 15q0-4 3.700-4 3 0 3.700 3M7 8q3-3 6 0l1 2" /></svg>
      <svg class="w-3 h-2 ml-5" viewBox="0 0 12 8" fill="none" stroke="#fff" stroke-width="1.200"><path d="M1 6.500l5-5 5 5" /></svg>
      <svg class="w-4 h-4 ml-2" viewBox="0 0 16 16" fill="none" stroke="#fff" stroke-width="1.300"><path d="M14.500 8V1L1 3v10h7M5 7.500a3 2.500 0 0 1 5.500-.500M10.500 5v2.500H8M5 9.500h3" /><circle cx="12" cy="12.500" r="3.200" fill="#f7941d" stroke="none" /></svg>
      <svg class="w-[15px] h-2.5 ml-2" viewBox="0 0 15 10"><path d="M.6.600h12v8.500H.600zM13 3.500h1.500v3H13" fill="none" stroke="#fff" stroke-width="1.200" /><path d="M2.500 2.500h6v5h-6z" fill="#fff" /></svg>
      <svg class="w-[11px] h-4 ml-2" viewBox="0 0 11 16"><rect x="3" width="5" height="10" rx="2" fill="#fff" /><path d="M1 7v3q0 2 2 2h5q2 0 2-2V7M5.500 12v3M3 15.300h5" fill="none" stroke="#fff" stroke-width="1.200" /></svg>
      <svg class="w-4 h-4 ml-2.5" viewBox="0 0 16 16" fill="none" stroke="#fff" stroke-width="1.100"><circle cx="7.500" cy="7.500" r="6.500" /><ellipse cx="7.500" cy="7.500" rx="3" ry="6.500" /><path d="M1 5.500h13M1 9.500h8" /><circle cx="12" cy="12" r="3" fill="#1b2b45" /><path d="M10 14l4-4" /></svg>
      <svg class="w-4 h-3.5 ml-1.5" viewBox="0 0 16 14" fill="none" stroke="#fff" stroke-width="1.100"><path d="M.6 5v4H3l3.500 3V2L3 5zM8.500 5q1.500 2 0 4M10.500 3.500q3 3.500 0 7M12.800 2q4 5 0 10" /></svg>
      <svg class="w-4 h-4 ml-2.5" viewBox="0 0 16 16" fill="none" stroke="#fff" stroke-width="1.300"><path d="M4 9 12 1q3 0 2 3L7 12l-3 1zM3 8c-4 3-1 8 2 6 3-3 3-4 5-5 3 0-2 4 0 5l4-3" /></svg>
      <svg class="w-[22px] h-[13px] ml-2.5" viewBox="0 0 22 13"><path d="M.6.600h20.500v11.500H.600z" fill="none" stroke="#fff" stroke-width="1.200" /><path d="M3 3.500h16M3 6.500h16" stroke="#fff" stroke-width="1.500" stroke-dasharray="1.500 1" /><path d="M5 9.500h12" stroke="#fff" stroke-width="1.500" /></svg>
      <span class="w-11 text-center">ENG</span>
      <div class="w-12 flex flex-col items-center whitespace-nowrap leading-[17px]"><span>3:29 PM</span><span>1/15/2021</span></div>
      <svg class="w-[17px] h-4 ml-[18px]" viewBox="0 0 17 16"><path d="M1 0h15v11H9l-4 4v-4H1z" fill="#fff" /><path d="M3.500 3h10M3.500 5.500h10M3.500 8h6" stroke="#1b2545" /><path d="M11 10a3.500 3.500 0 1 0 5 3q-4 1-5-3z" fill="#fff" stroke="#1b2545" stroke-width=".8" /></svg>
    </div>
  </footer>

  <script>
    const NS = "http://www.w3.org/2000/svg";
    const INCH = 90;

    function add(parent, tag, attrs, text) {
      const el = document.createElementNS(NS, tag);
      Object.entries(attrs).forEach(([k, v]) => el.setAttribute(k, v));
      if (text !== undefined) el.textContent = text;
      parent.appendChild(el);
    }

    function drawHorizontal() {
      const svg = document.getElementById("hruler");
      add(svg, "rect", { x: 0, y: 5, width: 764, height: 9, fill: "#fff" });
      add(svg, "rect", { x: 0, y: 5, width: 88, height: 9, fill: "#c6c6c6" });
      add(svg, "rect", { x: 674, y: 5, width: 90, height: 9, fill: "#c6c6c6" });
      for (let i = 0; i < 68; i++) {
        const x = Math.round(i * INCH / 8) - 1;
        if (i % 8 === 0) {
          const n = Math.abs(i / 8 - 1);
          if (n) add(svg, "text", { x, y: 13, "font-size": 9, "text-anchor": "middle", fill: "#444" }, n);
        } else if (i % 4 === 0) {
          add(svg, "rect", { x, y: 8, width: 1, height: 4, fill: "#777" });
        } else {
          add(svg, "rect", { x, y: 9, width: 1, height: 2, fill: "#666" });
        }
      }
      const mark = { fill: "#fff", stroke: "#888" };
      add(svg, "path", { d: "M90.500 2.500h8v3l-4 4-4-4z", ...mark });
      add(svg, "path", { d: "M112.500 22.500v-9l4-4 4 4v9zM112.500 16.500h8", ...mark });
      add(svg, "path", { d: "M669.500 16.500v-3l4-4 4 4v3z", ...mark });
    }

    function drawVertical() {
      const svg = document.getElementById("vruler");
      add(svg, "rect", { x: 5, y: 1, width: 10, height: 92, fill: "#c6c6c6" });
      add(svg, "rect", { x: 5, y: 93, width: 10, height: 380, fill: "#fff" });
      for (let i = 0; i < 42; i++) {
        const y = Math.round(i * INCH / 8) + 2;
        if (i % 8 === 0) {
          const n = Math.abs(i / 8 - 1);
          if (n) add(svg, "text", { x: 0, y: 0, transform: `translate(14 ${y}) rotate(-90)`, "font-size": 9, "text-anchor": "middle", fill: "#444" }, n);
        } else if (i % 4 === 0) {
          add(svg, "rect", { x: 9, y, width: 4, height: 1, fill: "#777" });
        } else {
          add(svg, "rect", { x: 10, y, width: 2, height: 1, fill: "#666" });
        }
      }
    }

    drawHorizontal();
    drawVertical();
  </script>
</body>
</html>
